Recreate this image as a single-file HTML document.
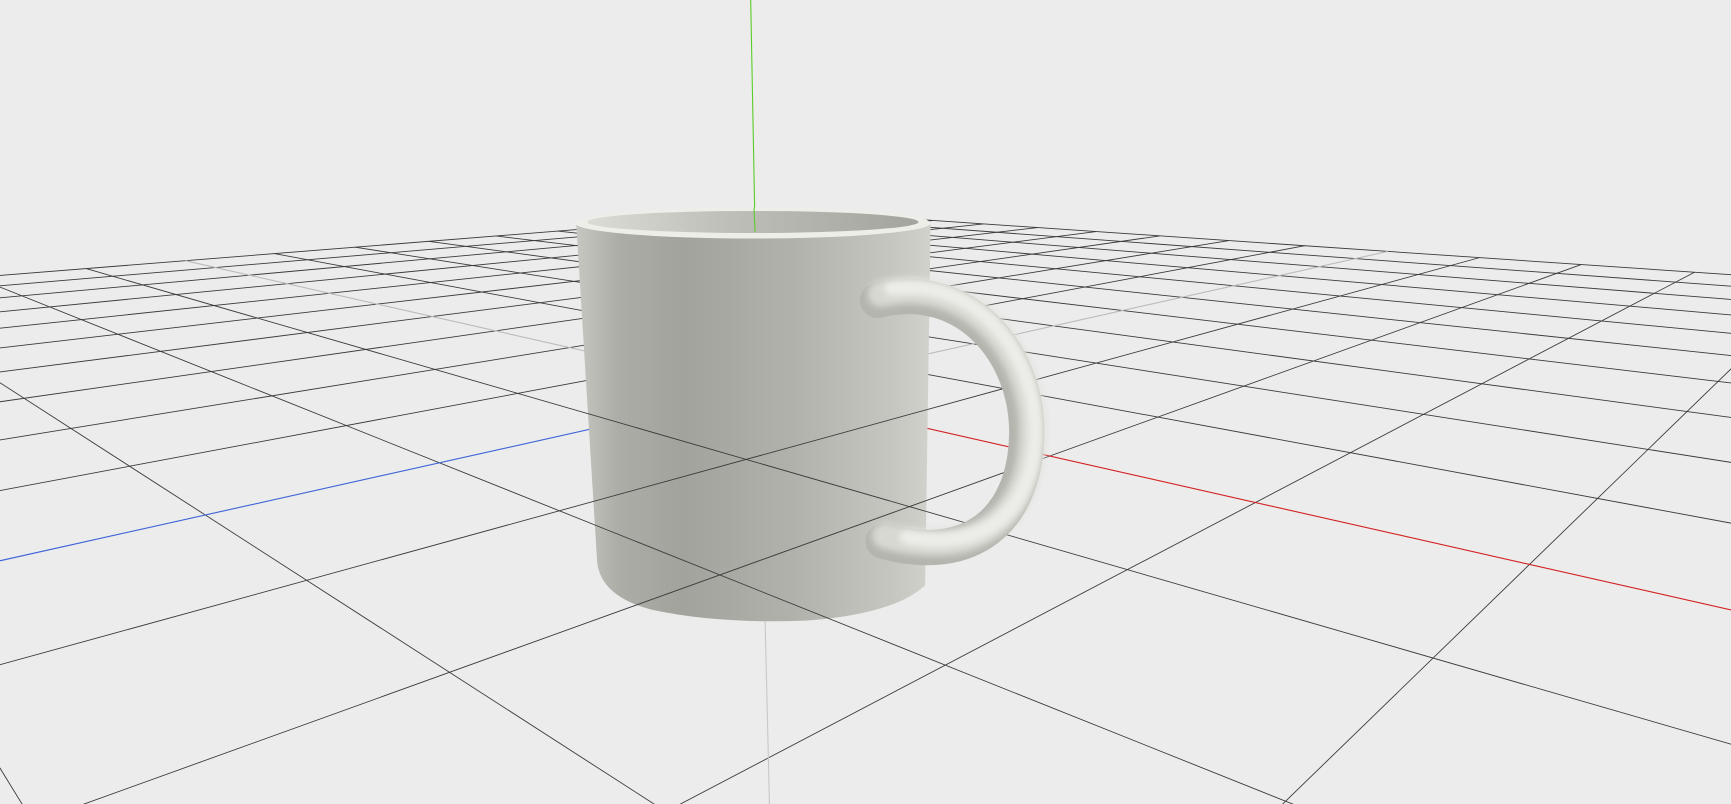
<!DOCTYPE html>
<html><head><meta charset="utf-8"><style>
html,body{margin:0;padding:0;background:#ececec;overflow:hidden;width:1731px;height:804px}
svg{display:block;position:absolute;left:0;top:0}
</style></head><body>
<svg id="s" width="1731" height="804" viewBox="0 0 1568 728" preserveAspectRatio="none" xmlns="http://www.w3.org/2000/svg">
<defs>
<linearGradient id="body" x1="522" x2="843" y1="0" y2="0" gradientUnits="userSpaceOnUse">
<stop offset="0" stop-color="#c6c7c1"/><stop offset="0.12" stop-color="#acada6"/><stop offset="0.3" stop-color="#a2a39c"/><stop offset="0.6" stop-color="#b0b1aa"/><stop offset="0.9" stop-color="#c6c7c0"/><stop offset="1" stop-color="#d2d2cc"/>
</linearGradient>
<linearGradient id="inner" x1="532" x2="832" y1="0" y2="0" gradientUnits="userSpaceOnUse">
<stop offset="0" stop-color="#dcdcd6"/><stop offset="0.4" stop-color="#c0c0ba"/><stop offset="1" stop-color="#a4a49e"/>
</linearGradient>
<clipPath id="mc"><path d="M522,203 L541,510 Q545,540 590,552 Q650,565 730,562 Q810,556 838,530 L843,203 Z"/></clipPath>
<clipPath id="lo"><rect x="0" y="352" width="1568" height="376"/></clipPath>
<clipPath id="hc"><path d="M795,272 C875,252 932,320 930,395 C928,470 880,512 800,490" fill="none" stroke="#000" stroke-width="32" stroke-linecap="round"/></clipPath>
<filter id="bl" x="-20%" y="-20%" width="140%" height="140%"><feGaussianBlur stdDeviation="3"/></filter>
</defs>
<g id="g1" stroke="#3a3a3a" stroke-width="0.8" fill="none"></g>
<g id="ax" fill="none" stroke-width="1"></g>
<line x1="680" y1="0" x2="684" y2="210" stroke="#5ccc2c" stroke-width="1"/>
<line x1="693" y1="560" x2="697" y2="728" stroke="#c8c8c8" stroke-width="1"/>
<path d="M522,203 L541,510 Q545,540 590,552 Q650,565 730,562 Q810,556 838,530 L843,203 Z" fill="url(#body)"/>
<ellipse cx="682" cy="202" rx="161" ry="14" fill="#eeeee9"/>
<ellipse cx="682" cy="201" rx="150" ry="10" fill="url(#inner)"/>
<line x1="683" y1="188" x2="684" y2="210" stroke="#5ccc2c" stroke-width="1"/>
<g clip-path="url(#mc)"><g clip-path="url(#lo)"><g id="g2" stroke="#3a3a3a" stroke-width="0.8" fill="none"></g></g></g>
<path d="M795,272 C875,252 932,320 930,395 C928,470 880,512 800,490" fill="none" stroke="#b4b5ae" stroke-width="32" stroke-linecap="round"/>
<g filter="url(#bl)">
<path d="M798,266 C880,248 937,320 935,395 C932,468 886,508 802,485" fill="none" stroke="#d8d8d2" stroke-width="24" stroke-linecap="round"/>
<path d="M808,261 C884,250 940,320 938,395 C935,460 895,500 822,486" fill="none" stroke="#ececE8" stroke-width="14" stroke-linecap="round"/>
</g>
</svg>
<script>
(function(){
var a=-0.0999,b=-0.1039,NS="http://www.w3.org/2000/svg";
function P(u,v){var d=1+a*u+b*v;return [(a*u*-355+b*v*1803+690)/d,(a*u*118+b*v*106+354)/d];}
function seg(g,u1,v1,u2,v2,col,w){
 var d1=1+a*u1+b*v1,d2=1+a*u2+b*v2,e=0.03;
 if(d1<e&&d2<e)return;
 if(d2<e){var t=(d1-e)/(d1-d2);u2=u1+(u2-u1)*t;v2=v1+(v2-v1)*t;}
 if(d1<e){var t=(d2-e)/(d2-d1);u1=u2+(u1-u2)*t;v1=v2+(v1-v2)*t;}
 var p=P(u1,v1),q=P(u2,v2),l=document.createElementNS(NS,"line");
 l.setAttribute("x1",p[0]);l.setAttribute("y1",p[1]);l.setAttribute("x2",q[0]);l.setAttribute("y2",q[1]);
 if(col){l.setAttribute("stroke",col);l.setAttribute("stroke-width",w||1);}
 g.appendChild(l);
}
var g1=document.getElementById("g1"),g2=document.getElementById("g2"),ax=document.getElementById("ax");
for(var i=-10;i<=10;i++){
 [g1,g2].forEach(function(g){
  if(i!==0){seg(g,-10,i,10,i);seg(g,i,-10,i,10);}
 });
}
seg(g1,-10,0,0,0,"#bbbbbb");seg(g1,0,-10,0,0,"#bbbbbb");
seg(ax,0,0,10,0,"#d42020",1);
seg(ax,0,0,0,10,"#3d63d8",1);
})();
</script>
</body></html>
